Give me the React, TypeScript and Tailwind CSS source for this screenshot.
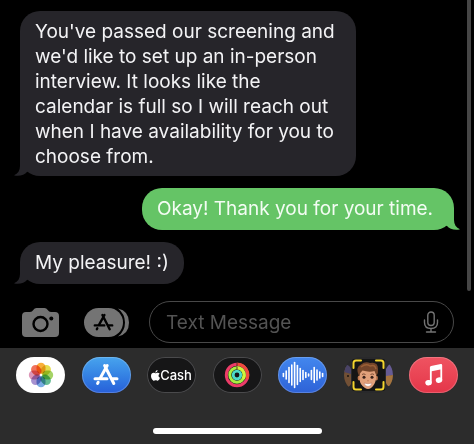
import type { ReactNode } from "react";

function Tail({ side }: { side: "left" | "right" }) {
  return (
    <svg
      aria-hidden="true"
      viewBox="0 0 20 22"
      className={
        side === "left"
          ? "absolute bottom-0 -left-1.5 h-[22px] w-5 text-[#26252a]"
          : "absolute -right-1.5 bottom-0 h-[22px] w-5 -scale-x-100 text-[#65c466]"
      }
    >
      <path
        fill="currentColor"
        d="M6 1V12C6 16.500 4 19.500 0 21.300C5 22.800 10.500 21 13.200 17.800L16 18V1Z"
      />
    </svg>
  );
}

function Bubble({ side, children }: { side: "left" | "right"; children: ReactNode }) {
  return (
    <div
      className={
        side === "left"
          ? "relative min-h-[42px] max-w-[336px] self-start rounded-[20px] bg-[#26252a] px-[15px] pt-2 pb-[7px] text-[#f3f3f5]"
          : "relative min-h-[42px] min-w-[312px] self-end rounded-[20px] bg-[#65c466] px-[15px] pt-2 pb-[7px] text-[#f3fcf3]"
      }
    >
      <Tail side={side} />
      <p className="relative">{children}</p>
    </div>
  );
}

function StoreGlyph({ className }: { className: string }) {
  return (
    <svg aria-hidden="true" viewBox="0 0 26 24" className={className} fill="none" stroke="currentColor" strokeLinecap="round">
      <path d="M14.200 2.500L7.300 15M11.600 2.500L20.800 20.500M5.200 19.300L4.600 20.400" />
      <path d="M2 15.700H14M19.500 15.700H24" />
    </svg>
  );
}

const petals = [
  ["#f8a623", 0],
  ["#e2d93a", 45],
  ["#9bcf55", 90],
  ["#55b58a", 135],
  ["#6ba3e0", 180],
  ["#9d86cb", 225],
  ["#d98bb0", 270],
  ["#f0654c", 315],
] as const;

function PhotosIcon() {
  return (
    <svg aria-hidden="true" viewBox="0 0 26 26" className="size-[26px]">
      {petals.map(([color, angle]) => (
        <rect
          key={color}
          x="8.500"
          y="0.800"
          width="9"
          height="11"
          rx="4.500"
          fill={color}
          className="mix-blend-multiply"
          opacity="0.9"
          transform={`rotate(${angle} 13 13)`}
        />
      ))}
    </svg>
  );
}

function CashIcon() {
  return (
    <span className="flex items-center text-[13px] leading-4 font-medium text-white">
      <svg aria-hidden="true" viewBox="0 0 20 24" className="h-[11px] w-[9px]" fill="currentColor">
        <path d="M14.500 0C14.800 3 12.400 5.700 9.700 5.700C9.400 3 11.800.4 14.500 0ZM10.200 7.200C11.200 7.200 12.700 5.800 15 5.900C16.700 6 18.300 6.800 19.200 8.200C15.500 10.500 16.100 15.600 20 17.100C19.100 19.800 17.200 23.500 14.900 23.600C13.300 23.600 12.700 22.600 10.700 22.600C8.700 22.600 8 23.500 6.600 23.600C4 23.700 0 17.800 0 12.900C0 8.400 2.900 6 5.700 5.900C7.500 5.900 9.200 7.200 10.200 7.200Z" />
      </svg>
      Cash
    </span>
  );
}

function RingsIcon() {
  return (
    <svg aria-hidden="true" viewBox="0 0 26 26" className="size-[26px]" fill="none" strokeWidth="3">
      <circle cx="13" cy="13" r="10.700" stroke="#ec3c68" />
      <path d="M13 2.300A10.700 10.700 0 0 1 23 17" stroke="#ef4b3d" />
      <circle cx="13" cy="13" r="7.200" stroke="#a8ef42" />
      <path d="M13 5.800A7.200 7.200 0 0 1 19 17" stroke="#d1f33c" />
      <circle cx="13" cy="13" r="3.800" stroke="#4bdcc8" strokeWidth="2.800" />
      <path d="M13 .8V4M13 4.500V7.500" stroke="#652a25" strokeWidth="1" />
    </svg>
  );
}

const bars = [3, 8, 15, 20, 25, 19, 13, 9, 5, 2, 9, 15, 10, 6, 3];

function WaveIcon() {
  return (
    <svg aria-hidden="true" viewBox="0 0 44 28" className="h-7 w-11" stroke="white" strokeWidth="1.600" strokeLinecap="round">
      {bars.map((height, i) => (
        <path key={i} d={`M${2.4 + i * 2.8} ${14 - height / 2}v${height}`} />
      ))}
    </svg>
  );
}

function MemojiIcon() {
  return (
    <svg aria-hidden="true" viewBox="0 0 49 36" className="h-full w-full">
      <rect width="49" height="36" fill="#29292b" />
      <path d="M0 9Q5 10 7 16V27Q5 31 0 30Z" fill="#725035" />
      <path d="M0 8Q5 7 7 12V17L0 15Z" fill="#494366" />
      <circle cx="4" cy="19" r="1" fill="#1d1410" />
      <path d="M42 12Q45 6 49 7V18L42 20Z" fill="#665b94" />
      <path d="M42 19L49 18V29Q44 31 42 26Z" fill="#a5743f" />
      <rect x="8" y="2" width="33" height="32" fill="#151515" />
      <ellipse cx="15.200" cy="21" rx="1.600" ry="2.500" fill="#bf7950" />
      <ellipse cx="32.300" cy="21" rx="1.600" ry="2.500" fill="#bf7950" />
      <path d="M15.500 13Q24 8 32 14V22Q31 28 27 31Q24 33 21 31Q16 28 15.500 22Z" fill="#e2a17b" />
      <path d="M15 19Q11 10 17 7.500Q21 4 26 6Q34 4.500 34 12Q34.500 16 32.500 19L30.500 14Q25 15.500 18.500 13.500Q16.500 15 15 19Z" fill="#74452a" />
      <path d="M17 10Q22 6 26 9Q31 7 32 12" stroke="#9b6037" strokeWidth="1.500" fill="none" />
      <path d="M18 17.500Q19.800 16.300 21.500 17.500M26.500 17.500Q28.200 16.300 30 17.500" stroke="#643b27" fill="none" strokeWidth=".8" />
      <circle cx="20" cy="20.200" r="1.500" fill="#3a221a" />
      <circle cx="28" cy="20.200" r="1.500" fill="#3a221a" />
      <path d="M23 23.500Q24 24.500 25 23.500" stroke="#bd7553" fill="none" strokeWidth=".8" />
      <path d="M20 26Q24 27.500 28 26Q27 29.500 24 29.500Q21 29.500 20 26Z" fill="#fff" stroke="#a8604b" strokeWidth=".4" />
      <path d="M9.500 11V6Q9.500 3.500 12 3.500H17M32 3.500H37Q39.500 3.500 39.500 6V11M39.500 25V30Q39.500 32.500 37 32.500H32M17 32.500H12Q9.500 32.500 9.500 30V25" fill="none" stroke="#f2d42e" strokeWidth="2" strokeLinecap="round" />
    </svg>
  );
}

function MusicIcon() {
  return (
    <svg aria-hidden="true" viewBox="0 0 22 26" className="h-6 w-5" fill="white">
      <path d="M6.500 4.500Q6.500 3.300 7.800 3L18.500 1Q20 .8 20 2.200V18.500H18V7L8.500 9V21.500H6.500Z" />
      <ellipse cx="5" cy="21.500" rx="3.600" ry="3" transform="rotate(-15 5 21.500)" />
      <ellipse cx="16.500" cy="18.700" rx="3.600" ry="3" transform="rotate(-15 16.500 18.700)" />
    </svg>
  );
}

const apps = [
  { name: "Photos", look: "bg-white", icon: <PhotosIcon /> },
  { name: "App Store", look: "bg-linear-to-b from-[#48a4ed] to-[#285fd9] text-white ring-1 ring-inset ring-white/20", icon: <StoreGlyph className="h-6 w-[26px] stroke-[3]" /> },
  { name: "Apple Cash", look: "bg-[#161617] ring-1 ring-inset ring-[#4a4a4c]", icon: <CashIcon /> },
  { name: "Fitness", look: "bg-[#161617] ring-1 ring-inset ring-[#4a4a4c]", icon: <RingsIcon /> },
  { name: "Audio", look: "bg-linear-to-b from-[#4387ee] to-[#2e62d7] ring-1 ring-inset ring-white/20", icon: <WaveIcon /> },
  { name: "Memoji", look: "bg-[#29292b]", icon: <MemojiIcon /> },
  { name: "Music", look: "bg-linear-to-b from-[#ef5361] to-[#e43549] ring-1 ring-inset ring-white/20", icon: <MusicIcon /> },
];

export default function App() {
  return (
    <div className="flex min-h-screen flex-col bg-black font-['Inter','Liberation_Sans',sans-serif]">
      <main className="relative flex flex-col gap-3 px-5 pt-[11px] pb-[17px] text-[19px] leading-[25px]">
        <Bubble side="left">
          You've passed our screening and we'd like to set up an in-person interview. It looks like the
          calendar is full so I will reach out when I have availability for you to choose from.
        </Bubble>
        <Bubble side="right">Okay! Thank you for your time.</Bubble>
        <Bubble side="left">My pleasure! :)</Bubble>
        <div className="absolute top-0 right-[3px] bottom-[10px] w-1 rounded-b-full bg-[#464646]" />
      </main>

      <form className="flex items-center pr-5 pb-[5px] pl-[22px] text-[#747474]" onSubmit={(e) => e.preventDefault()}>
        <button type="button" aria-label="Camera" className="shrink-0">
          <svg aria-hidden="true" viewBox="0 0 37 29" className="h-[29px] w-[37px]">
            <path fill="currentColor" d="M4 4H8Q10 4 11.500 1.800Q12.500 0 14.500 0H22.500Q24.500 0 25.500 1.800Q27 4 29 4H33Q37 4 37 8V25Q37 29 33 29H4Q0 29 0 25V8Q0 4 4 4Z" />
            <circle cx="18.500" cy="16" r="7" fill="none" stroke="black" strokeWidth="2.400" />
            <circle cx="29.300" cy="10.500" r="2" fill="black" />
          </svg>
        </button>
        <button type="button" aria-label="Apps" className="relative ml-[25px] h-[29px] w-[45px] shrink-0">
          <svg aria-hidden="true" viewBox="0 0 45 29" className="size-full">
            <path d="M34 .5Q45 3 45 14.500Q45 26 34 28.500Q41 23 41 14.500Q41 6 34 .5Z" fill="currentColor" />
            <rect width="39" height="29" rx="14.500" fill="currentColor" />
          </svg>
          <StoreGlyph className="absolute top-[5px] left-[9px] h-[19px] w-[21px] stroke-[3] text-black" />
        </button>
        <div className="ml-5 flex h-[42px] min-w-0 flex-1 items-center rounded-full border border-[#484848] pr-[14px] pl-4">
          <input
            type="text"
            aria-label="Text Message"
            placeholder="Text Message"
            className="min-w-0 flex-1 bg-transparent text-[19px] leading-[25px] text-white outline-none placeholder:text-[#535353]"
          />
          <button type="button" aria-label="Dictate" className="shrink-0">
            <svg aria-hidden="true" viewBox="0 0 16 22" className="h-[22px] w-4" fill="none" stroke="currentColor" strokeWidth="1.400" strokeLinecap="round">
              <rect x="4.800" y="1" width="6.400" height="13.500" rx="3.200" />
              <path d="M1.500 9V11.500Q1.500 17.500 8 17.500Q14.500 17.500 14.500 11.500V9M8 17.500V21M3.500 21H12.500" />
            </svg>
          </button>
        </div>
      </form>

      <footer className="flex flex-1 flex-col items-center justify-between bg-[#2c2c2c] pt-[9px] pb-[10px]">
        <nav className="flex w-full justify-between px-4" aria-label="Message apps">
          {apps.map((app) => (
            <button
              key={app.name}
              type="button"
              aria-label={app.name}
              className={`flex h-9 w-[49px] items-center justify-center overflow-hidden rounded-full ${app.look}`}
            >
              {app.icon}
            </button>
          ))}
        </nav>
        <div className="h-1.5 w-[169px] rounded-full bg-white" />
      </footer>
    </div>
  );
}
